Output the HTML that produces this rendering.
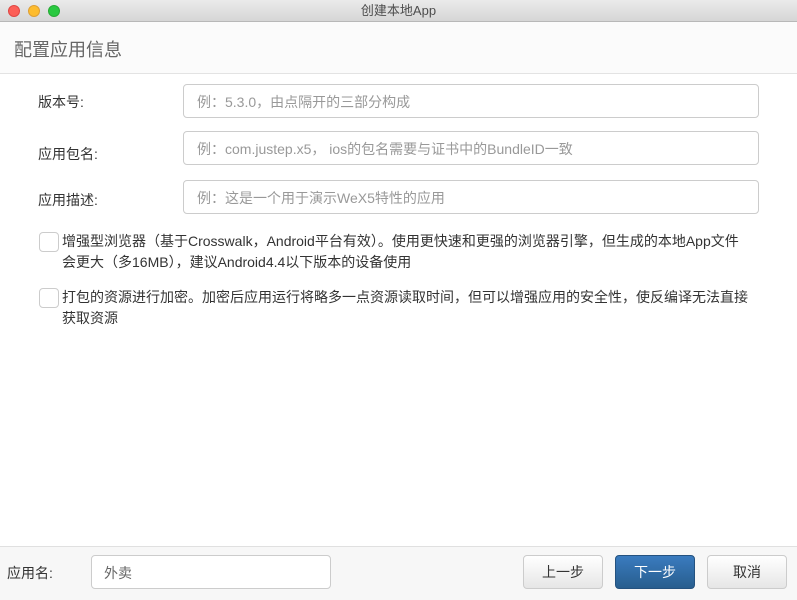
<!DOCTYPE html>
<html><head><meta charset="utf-8"><style>
*{margin:0;padding:0;box-sizing:border-box}
body{width:797px;height:600px;overflow:hidden;background:#fff;font-family:"Liberation Sans","Noto Sans CJK SC",sans-serif;position:relative;color:#333}
.tb{position:absolute;left:0;top:0;width:797px;height:22px;background:linear-gradient(#ebebeb,#d6d6d6);border-bottom:1px solid #b8b8b8;text-align:center;font-size:13px;line-height:22px;color:#4d4d4d}
.dot{position:absolute;top:5px;width:12px;height:12px;border-radius:50%}
.hd{position:absolute;top:22px;left:0;width:797px;height:52px;background:#fbfbfb;border-bottom:1px solid #e3e3e3;font-size:18px;color:#666;padding:14px 0 0 14px}
.lab{position:absolute;left:38px;font-size:14px;color:#333}
.in{position:absolute;left:183px;width:576px;height:34px;border:1px solid #ccc;border-radius:4px;font-size:14px;color:#999;padding:7px 0 0 13px;background:#fff}
.cb{position:absolute;left:39px;width:20px;height:20px;border:1px solid #ccc;border-radius:4px;background:#fff}
.ct{position:absolute;left:62px;width:710px;font-size:14px;line-height:21px;color:#333}
.ft{position:absolute;left:0;top:546px;width:797px;height:54px;background:#f7f7f7;border-top:1px solid #e0e0e0}
.btn{position:absolute;top:555px;width:80px;height:34px;border:1px solid #ccc;border-radius:4px;background:linear-gradient(#fff,#e6e6e6);font-size:14px;text-align:center;line-height:32px;color:#333}
</style></head><body>
<div class="tb">创建本地App</div>
<div class="dot" style="left:8px;background:#fc5f57;border:1px solid #df4744"></div>
<div class="dot" style="left:28px;background:#fdbc2e;border:1px solid #de9f34"></div>
<div class="dot" style="left:48px;background:#29c940;border:1px solid #27aa35"></div>
<div class="hd">配置应用信息</div>
<div class="lab" style="top:92px">版本号:</div>
<div class="in" style="top:84px">例：5.3.0，由点隔开的三部分构成</div>
<div class="lab" style="top:144px">应用包名:</div>
<div class="in" style="top:131px">例：com.justep.x5， ios的包名需要与证书中的BundleID一致</div>
<div class="lab" style="top:190px">应用描述:</div>
<div class="in" style="top:180px">例：这是一个用于演示WeX5特性的应用</div>
<div class="cb" style="top:232px"></div>
<div class="ct" style="top:231px">增强型浏览器（基于Crosswalk，Android平台有效）。使用更快速和更强的浏览器引擎，但生成的本地App文件<br>会更大（多16MB），建议Android4.4以下版本的设备使用</div>
<div class="cb" style="top:288px"></div>
<div class="ct" style="top:287px">打包的资源进行加密。加密后应用运行将略多一点资源读取时间，但可以增强应用的安全性，使反编译无法直接<br>获取资源</div>
<div class="ft"></div>
<div style="position:absolute;left:7px;top:563px;font-size:14px;color:#333">应用名:</div>
<div style="position:absolute;left:91px;top:555px;width:240px;height:34px;border:1px solid #ccc;border-radius:4px;background:#fff;font-size:14px;color:#666;padding:7px 0 0 12px">外卖</div>
<div class="btn" style="left:523px">上一步</div>
<div class="btn" style="left:615px;background:linear-gradient(#3a7bbf,#285e8e);border-color:#24527f;color:#fff">下一步</div>
<div class="btn" style="left:707px">取消</div>
</body></html>
